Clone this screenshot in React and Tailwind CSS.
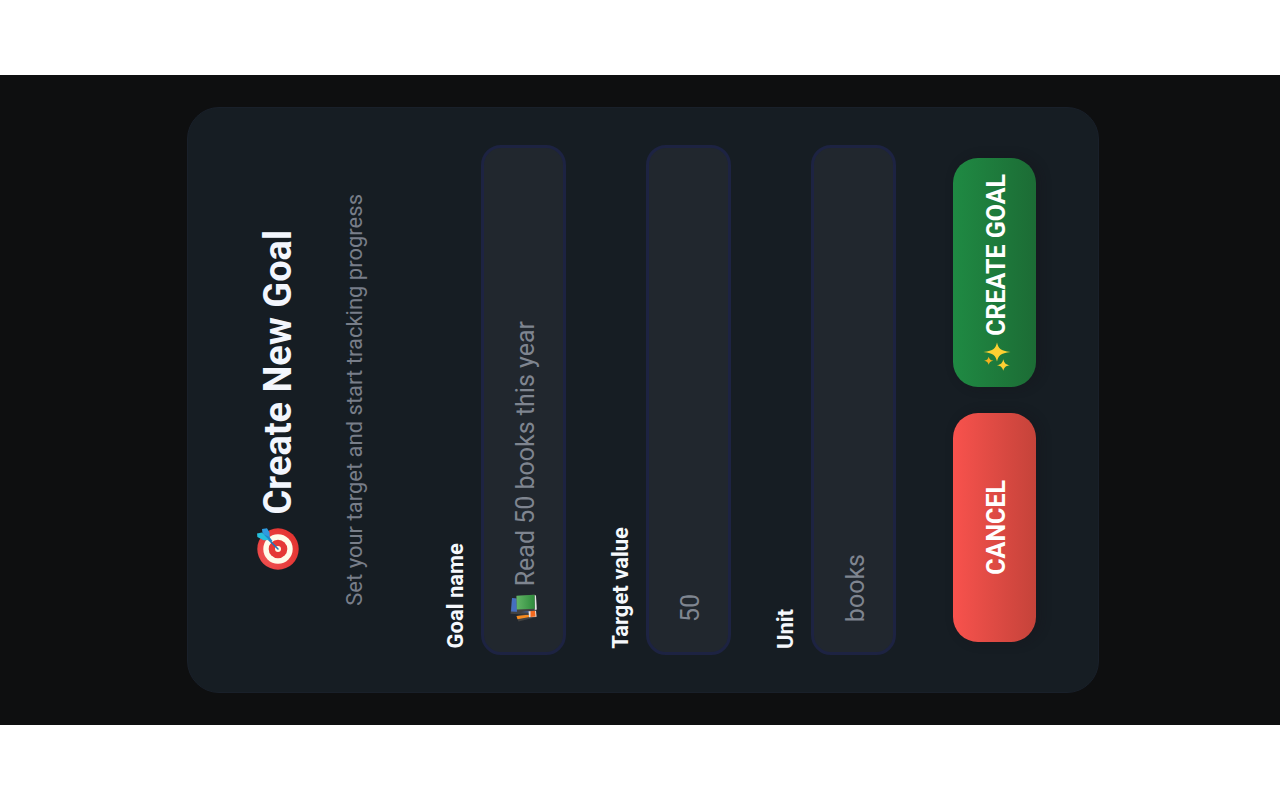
import { useState } from 'react'

function TargetIcon() {
  return (
    <svg viewBox="0 0 42 43" className="h-[43px] w-[42px] shrink-0" aria-hidden="true">
      <defs>
        <radialGradient id="board" cx="0.3" cy="0.65" r="0.7">
          <stop offset="0" stopColor="#ef5555" />
          <stop offset="1" stopColor="#e53532" />
        </radialGradient>
      </defs>
      <circle cx="21" cy="22" r="20.7" fill="url(#board)" />
      <circle cx="21" cy="22" r="14.7" fill="#fffcea" />
      <circle cx="21" cy="22" r="9.3" fill="#e53936" />
      <circle cx="21" cy="22" r="3" fill="#fff8e1" />
      <path d="M9 10 21 22" stroke="#1976c2" strokeWidth="1.6" strokeLinecap="round" />
      <path d="M0 6.500 5 5.500 9 9l3.500 4-6 .2L.4 10Z" fill="#26bfdc" />
      <path d="M5 2 10 1.200l2.500 4.300.2 5L14.500 15 8.500 9.500 5.400 5.700Z" fill="#2f9be0" />
      <path d="M7 7.500 14 15l1.500-1-3-4Z" fill="#1e88c9" />
    </svg>
  )
}

function BooksIcon() {
  return (
    <svg viewBox="0 0 28 28" className="h-7 w-7 shrink-0" aria-hidden="true">
      <defs>
        <linearGradient id="cover" x1="0" x2="1">
          <stop offset="0" stopColor="#62b566" />
          <stop offset="1" stopColor="#2e8b3c" />
        </linearGradient>
      </defs>
      <path d="M6.500 22 26 18l.8 5L8.500 27.500Z" fill="#424242" />
      <path d="M6.500 22 20 20.500l-.5 2.500L7.500 25.200Z" fill="#f68b1f" />
      <path d="M2 4 20 6l-.5 15L.500 19.800Z" fill="#424242" />
      <path d="M2 4 20 6l-.5 12.500L1 17.500Z" fill="#456fc0" />
      <path d="M18.500 16.500h7.500l.5 6.300-7.500.5Z" fill="#e8e0dc" />
      <path d="M20.500 16.500h4.500l.5 6-5 .5Z" fill="#f4691e" />
      <path d="m6.500 2 18.500-1.500 1.500 16L7 18.500Z" fill="#424242" />
      <path d="m24.500 1 1.500.5.8 14-2 .5Z" fill="#e4e4e4" />
      <path d="M6.500 1.800 24.500.8l.3 14L6.800 15.500Z" fill="url(#cover)" />
    </svg>
  )
}

function SparklesIcon() {
  return (
    <svg viewBox="0 0 28 29" className="h-[29px] w-7 shrink-0" aria-hidden="true">
      <path d="M14 .5c1.400 6 3.200 8.300 13.500 9.500C17.200 11.500 15.400 13.500 14 19.500c-1.400-6-3.200-8-13.500-9.500C10.800 8.800 12.600 6.500 14 .5Z" fill="#fdd032" />
      <path d="M20.300 17.200c1 3.800 2.200 5.200 6.500 6-4.300.7-5.500 2-6.500 5.500-1-3.500-2.200-4.800-6.500-5.500 4.300-.8 5.500-2.200 6.500-6Z" fill="#fdd032" />
      <path d="M5.700 14.800c.7 2.500 1.600 3.300 4.600 3.900-3 .6-3.900 1.600-4.600 4-.7-2.400-1.600-3.400-4.600-4 3-.6 3.900-1.400 4.600-3.900Z" fill="#f5b11e" />
    </svg>
  )
}

function Field({ id, label, icon, ...props }) {
  return (
    <div className="flex flex-col">
      <label htmlFor={id} className="pb-[6px] text-[22px] leading-8 font-bold text-[#f5f8fc]">
        {label}
      </label>
      <div className="ml-[9px] flex w-[85px] items-center gap-2 rounded-[20px] border-3 border-[#1d2342] bg-[#21272e] px-[30px]">
        {icon}
        <input
          id={id}
          className="h-full min-h-0 w-9 flex-1 bg-transparent pl-1 text-[25px] leading-8 text-white outline-none placeholder:text-[#7f8590] placeholder:opacity-100"
          {...props}
        />
      </div>
    </div>
  )
}

const fields = [
  { id: 'name', label: 'Goal name', placeholder: 'Read 50 books this year', icon: <BooksIcon /> },
  { id: 'target', label: 'Target value', placeholder: '50', inputMode: 'numeric' },
  { id: 'unit', label: 'Unit', placeholder: 'books' },
]

const buttonClass =
  'flex w-[83px] flex-1 items-center justify-center gap-1.5 rounded-[25px] pl-1 text-[25px] leading-8 font-bold text-white shadow-[4px_0_12px_rgba(24,18,24,0.3)]'

function App() {
  const [values, setValues] = useState({ name: '', target: '', unit: '' })

  return (
    <div className="flex min-h-screen items-center bg-white font-['Roboto',sans-serif]">
      {/* the whole form reads bottom to top */}
      <main className="flex w-full flex-col items-center justify-center bg-[#0e0f10] pt-8 pb-8 pl-1.5 [writing-mode:sideways-lr]">
        <form
          onSubmit={(e) => e.preventDefault()}
          className="flex h-[586px] flex-col rounded-[32px] border border-[#19202a] bg-[#161d23] pt-[37px] pr-[62px] pb-[37px] pl-[66px]"
        >
          <h1 className="flex w-12 items-center justify-center gap-3 text-[38px] leading-[48px] font-bold text-[#f3f6fd]">
            <TargetIcon />
            Create New Goal
          </h1>
          <p className="ml-[37px] text-center text-[22px] leading-8 text-[#787e89]">
            Set your target and start tracking progress
          </p>

          <div className="ml-[69px] flex flex-col gap-[39px]">
            {fields.map((field) => (
              <Field
                key={field.id}
                {...field}
                value={values[field.id]}
                onChange={(e) => setValues({ ...values, [field.id]: e.target.value })}
              />
            ))}
          </div>

          <div className="ml-[57px] flex gap-[26px] px-[13px]">
            <button type="button" className={`${buttonClass} bg-linear-to-r from-[#f8524d] to-[#c5433a]`}>
              CANCEL
            </button>
            <button type="submit" className={`${buttonClass} bg-linear-to-r from-[#1f8a43] to-[#1c6c35]`}>
              <SparklesIcon />
              CREATE GOAL
            </button>
          </div>
        </form>
      </main>
    </div>
  )
}

export default App
